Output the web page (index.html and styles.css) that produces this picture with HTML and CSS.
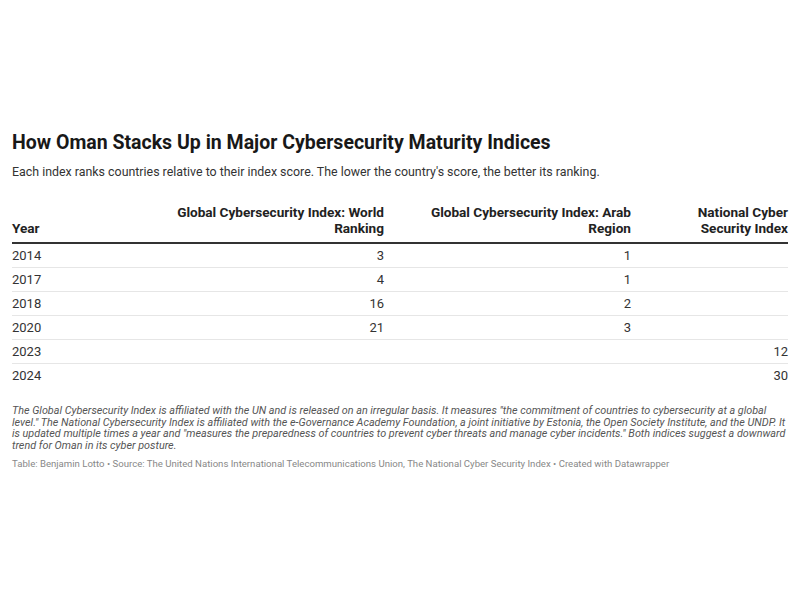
FILE: index.html
```html
<!DOCTYPE html>
<html>
<head>
<meta charset="utf-8">
<link rel="stylesheet" href="styles.css">
</head>
<body>
<div class="chart">
  <h1 class="title">How Oman Stacks Up in Major Cybersecurity Maturity Indices</h1>
  <p class="subtitle">Each index ranks countries relative to their index score. The lower the country's score, the better its ranking.</p>
  <table class="data">
    <colgroup>
      <col class="c-year">
      <col class="c-world">
      <col class="c-arab">
      <col class="c-ncsi">
    </colgroup>
    <thead>
      <tr>
        <th class="left">Year</th>
        <th>Global Cybersecurity Index: World Ranking</th>
        <th>Global Cybersecurity Index: Arab Region</th>
        <th>National Cyber Security Index</th>
      </tr>
    </thead>
    <tbody>
      <tr><td class="left">2014</td><td>3</td><td>1</td><td></td></tr>
      <tr><td class="left">2017</td><td>4</td><td>1</td><td></td></tr>
      <tr><td class="left">2018</td><td>16</td><td>2</td><td></td></tr>
      <tr><td class="left">2020</td><td>21</td><td>3</td><td></td></tr>
      <tr><td class="left">2023</td><td></td><td></td><td>12</td></tr>
      <tr><td class="left">2024</td><td></td><td></td><td>30</td></tr>
    </tbody>
  </table>
  <p class="notes">The Global Cybersecurity Index is affiliated with the UN and is released on an irregular basis. It measures "the commitment of countries to cybersecurity at a global level." The National Cybersecurity Index is affiliated with the e-Governance Academy Foundation, a joint initiative by Estonia, the Open Society Institute, and the UNDP. It is updated multiple times a year and "measures the preparedness of countries to prevent cyber threats and manage cyber incidents." Both indices suggest a downward trend for Oman in its cyber posture.</p>
  <p class="source">Table: Benjamin Lotto • Source: The United Nations International Telecommunications Union, The National Cyber Security Index • Created with Datawrapper</p>
</div>
</body>
</html>
```

FILE: styles.css
```css
html, body {
  margin: 0;
  padding: 0;
  background: #ffffff;
}

body {
  font-family: Roboto, "Liberation Sans", Arial, sans-serif;
  color: #333333;
}

.chart {
  width: 776px;
  padding: 130px 12px 0 12px;
}

.title {
  margin: 0;
  font-size: 19.5px;
  line-height: 26px;
  font-weight: 700;
  color: #181818;
}

.subtitle {
  margin: 7px 0 0 0;
  font-size: 12.4px;
  line-height: 18px;
  color: #333333;
}

.data {
  width: 776px;
  margin-top: 23px;
  border-collapse: collapse;
  table-layout: fixed;
  font-size: 13px;
}

.c-year { width: 138px; }
.c-world { width: 234px; }
.c-arab { width: 247px; }
.c-ncsi { width: 157px; }

.data th {
  font-size: 13.6px;
  font-weight: 700;
  line-height: 16px;
  text-align: right;
  vertical-align: bottom;
  padding: 0 0 6px 20px;
  border-bottom: 2px solid #333333;
  color: #222222;
}

.data td {
  text-align: right;
  line-height: 16px;
  padding: 4px 0 3px 20px;
  border-bottom: 1px solid #e6e6e6;
  color: #333333;
}

.data tbody tr:last-child td {
  border-bottom: none;
}

.data .left {
  text-align: left;
  padding-left: 0;
}

.notes {
  margin: 18px 0 0 0;
  font-size: 10.8px;
  line-height: 11.7px;
  font-style: italic;
  color: #555555;
}

.source {
  margin: 6px 0 0 0;
  font-size: 9.6px;
  line-height: 12px;
  color: #888888;
}
```
